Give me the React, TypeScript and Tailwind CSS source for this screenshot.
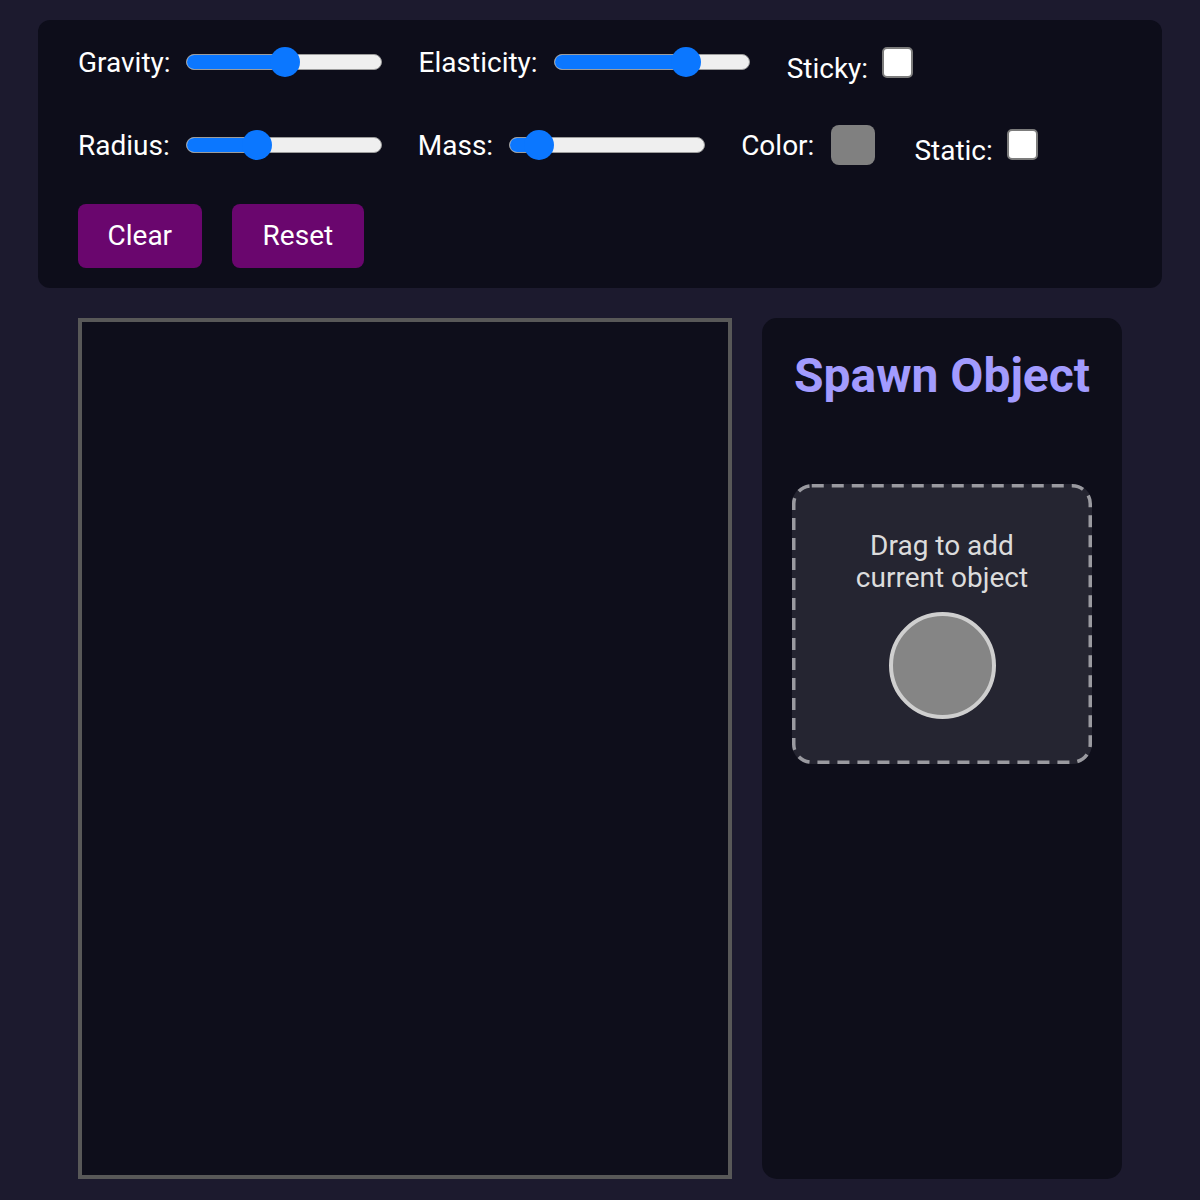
import React from 'react';

const Slider: React.FC<{ pos: number }> = ({ pos }) => (
  <div className="relative w-[196px] h-[30px] flex items-center shrink-0">
    <div className="w-full h-[16px] rounded-full bg-[#efefef] border border-[#9c9c9c] overflow-hidden">
      <div className="h-full bg-[#0b77ff]" style={{ width: pos }}></div>
    </div>
    <div className="absolute top-0 w-[30px] h-[30px] rounded-full bg-[#0b77ff]" style={{ left: pos - 15 }}></div>
  </div>
);

const Checkbox: React.FC = () => (
  <div className="w-[31px] h-[31px] shrink-0 rounded-[5px] bg-white border-2 border-[#7c7c7c]"></div>
);

const App: React.FC = () => {
  return (
    <div className="min-h-screen bg-[#1c1a2e] pt-[20px] pb-[20px] text-white [font-family:Roboto,'Liberation_Sans',sans-serif]">
      <div className="mx-[38px] rounded-[12px] bg-[#0d0d1a] px-[40px] pt-[27px] pb-[20px]">
        {/* row 1 */}
        <div className="flex items-start h-[31px] gap-[37px]">
          <div className="flex items-start gap-[15px]">
            <span className="text-[28px] leading-[32px]">Gravity:</span>
            <Slider pos={99} />
          </div>
          <div className="flex items-start gap-[16px]">
            <span className="text-[28px] leading-[32px]">Elasticity:</span>
            <Slider pos={132} />
          </div>
          <div className="flex items-baseline gap-[14px]">
            <span className="text-[28px] leading-[30px]">Sticky:</span>
            <Checkbox />
          </div>
        </div>

        {/* row 2 */}
        <div className="flex items-center h-[40px] gap-[36px] mt-[47px]">
          <div className="flex items-center gap-[16px]">
            <span className="text-[28px] leading-[30px] pt-[2px]">Radius:</span>
            <Slider pos={71} />
          </div>
          <div className="flex items-center gap-[16px]">
            <span className="text-[28px] leading-[30px] pt-[2px]">Mass:</span>
            <Slider pos={30} />
          </div>
          <div className="flex items-center gap-[17px]">
            <span className="text-[28px] leading-[30px] pt-[2px]">Color:</span>
            <div className="w-[44px] h-[40px] rounded-[8px] bg-[#808080]"></div>
          </div>
          <div className="flex items-baseline gap-[14px] self-start mt-[4px] ml-[3px]">
            <span className="text-[28px] leading-[30px]">Static:</span>
            <Checkbox />
          </div>
        </div>

        {/* buttons */}
        <div className="flex gap-[30px] mt-[39px]">
          <button className="h-[64px] px-[29.5px] rounded-[8px] bg-[#6a066e] text-white text-[28px]">Clear</button>
          <button className="h-[64px] px-[31px] rounded-[8px] bg-[#6a066e] text-white text-[28px]">Reset</button>
        </div>
      </div>

      <div className="flex gap-[30px] mx-[78px] mt-[30px]">
        <div className="w-[654px] h-[861px] shrink-0 border-4 border-[#585858] bg-[#0e0e1b]"></div>
        <div className="w-[360px] h-[861px] shrink-0 rounded-[15px] bg-[#0e0e1a] px-[30px] pt-[30px] flex flex-col items-center">
          <h2 className="text-[48px] leading-[56px] font-bold text-[#a29bfe]">Spawn Object</h2>
          <div className="relative mt-[80px] w-[300px] h-[280px] rounded-[20px] bg-[#252531] flex flex-col items-center pt-[46px]">
            <svg className="absolute inset-0 pointer-events-none" width="300" height="280">
              <rect x="1.75" y="1.75" width="296.5" height="276.5" rx="18" fill="none" stroke="#9a9aa0" strokeWidth="3.5" strokeDasharray="12 8" />
            </svg>
            <p className="text-[28px] leading-[32px] text-[#dcdcdc] text-center">
              Drag to add
              <br />
              current object
            </p>
            <div className="mt-[18px] w-[107px] h-[107px] rounded-full bg-[#858585] border-4 border-[#cfcfcf]"></div>
          </div>
        </div>
      </div>
    </div>
  );
};

export default App;
